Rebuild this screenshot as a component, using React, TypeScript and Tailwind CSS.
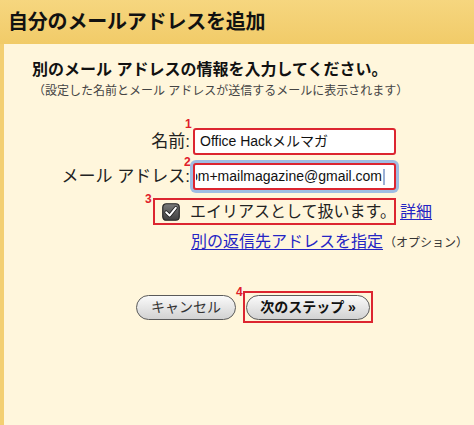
import React from 'react';

const font = "font-['Liberation_Sans','Noto_Sans_CJK_JP',sans-serif]";

function Marker({ n, className }: { n: string; className: string }) {
  return (
    <span className={`absolute text-[12px] font-bold leading-none text-[#e0202a] ${className}`}>{n}</span>
  );
}

function CheckIcon() {
  return (
    <svg width="18" height="18" viewBox="0 0 18 18" className="shrink-0">
      <defs>
        <linearGradient id="cb" x1="0" y1="0" x2="0" y2="1">
          <stop offset="0" stopColor="#7a7a7a" />
          <stop offset="1" stopColor="#3f3f3f" />
        </linearGradient>
      </defs>
      <rect x="0.75" y="0.75" width="16.5" height="16.5" rx="3.5" fill="url(#cb)" stroke="#262626" strokeWidth="1.2" />
      <path d="M4.2 9.2 L7.6 12.6 L13.8 4.8" fill="none" stroke="#1e1e1e" strokeWidth="3.6" strokeLinecap="round" strokeLinejoin="round" />
      <path d="M4.2 9.2 L7.6 12.6 L13.8 4.8" fill="none" stroke="#ffffff" strokeWidth="2" strokeLinecap="round" strokeLinejoin="round" />
    </svg>
  );
}

export default function App() {
  return (
    <div className={`w-[474px] h-[425px] overflow-hidden flex flex-col bg-[#fff6dc] text-[#1c1c1c] ${font}`}>
      <div className="h-[44px] shrink-0 flex items-center pl-2 bg-gradient-to-b from-[#f6d67f] to-[#f1cb68]">
        <h1 className="text-[20px] font-bold text-[#111] tracking-[-0.2px] whitespace-nowrap">自分のメールアドレスを追加</h1>
      </div>

      <div className="flex-1 border-l-4 border-[#f3cf72] bg-[#fff6dc]">
        <div className="pl-[28px] pt-[16px] whitespace-nowrap">
          <h2 className="text-[16px] leading-[20px] font-bold text-[#111]">別のメール アドレスの情報を入力してください。</h2>
          <p className="mt-[3px] pl-[1px] text-[12px] leading-[16px] text-[#444]">（設定した名前とメール アドレスが送信するメールに表示されます）</p>
        </div>

        <div className="mt-[29px] flex items-center">
          <label className="w-[186px] shrink-0 text-right text-[17px] text-[#222] whitespace-nowrap">名前:</label>
          <div className="relative ml-[3px] shrink-0">
            <Marker n="1" className="-left-[8px] -top-[10px]" />
            <div className="w-[203px] h-[27px] rounded-[3px] border-2 border-[#dc2530] bg-white flex items-center pl-[5px] text-[14px] text-[#111] whitespace-nowrap">
              Office Hackメルマガ
            </div>
          </div>
        </div>

        <div className="mt-[8px] flex items-center">
          <label className="w-[186px] shrink-0 text-right text-[17px] text-[#222] whitespace-nowrap">メール アドレス:</label>
          <div className="relative ml-[3px] shrink-0">
            <Marker n="2" className="-left-[9px] -top-[7px]" />
            <div className="w-[203px] h-[27px] rounded-[3px] border-2 border-[#dc2530] bg-white shadow-[0_0_0_3px_#9fbde3] flex items-center pl-[1px] pr-[9px] text-[14px] text-[#111]">
              <div className="flex-1 overflow-hidden flex justify-end whitespace-nowrap">
                <span>ice.com+mailmagazine@gmail.com</span>
              </div>
              <span className="ml-[1px] w-[2px] h-[16px] shrink-0 bg-[#9ab0d6]" />
            </div>
          </div>
        </div>

        <div className="mt-[8px] flex items-center">
          <div className="relative ml-[149px] shrink-0">
            <Marker n="3" className="-left-[8px] -top-[5px]" />
            <div className="w-[243px] h-[27px] border-2 border-[#dc2530] flex items-center pl-[7px] gap-[10px] whitespace-nowrap">
              <CheckIcon />
              <span className="text-[16px] text-[#222]">エイリアスとして扱います。</span>
            </div>
          </div>
          <a className="ml-[4px] text-[16px] text-[#2525c4] underline underline-offset-2 whitespace-nowrap">詳細</a>
        </div>

        <div className="mt-[7px] pl-[187px] flex items-baseline h-[20px] whitespace-nowrap">
          <a className="text-[16px] leading-[20px] text-[#2525c4] underline underline-offset-2">別の返信先アドレスを指定</a>
          <span className="ml-[1px] text-[12px] text-[#333]">（オプション）</span>
        </div>

        <div className="mt-[39px] flex items-center">
          <button className="ml-[132px] w-[100px] h-[25px] shrink-0 rounded-full border-[1.5px] border-[#5a5a5a] bg-gradient-to-b from-[#fafafa] to-[#d2d2d2] text-[14px] text-[#333] flex items-center justify-center whitespace-nowrap">
            キャンセル
          </button>
          <div className="relative ml-[7px] shrink-0">
            <Marker n="4" className="-left-[7px] -top-[5px]" />
            <div className="w-[130px] h-[32px] border-2 border-[#dc2530] flex items-center justify-center">
              <button className="w-[124px] h-[25px] rounded-full border-[1.5px] border-[#5a5a5a] bg-gradient-to-b from-[#fafafa] to-[#d2d2d2] text-[14px] font-bold text-[#111] flex items-center justify-center whitespace-nowrap">
                次のステップ »
              </button>
            </div>
          </div>
        </div>
      </div>
    </div>
  );
}
